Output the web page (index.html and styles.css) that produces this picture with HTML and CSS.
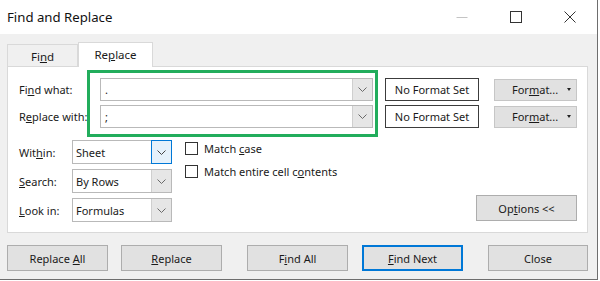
FILE: index.html
```html
<!DOCTYPE html>
<html>
<head>
<meta charset="utf-8">
<link rel="stylesheet" href="styles.css">
</head>
<body>
<div class="window">
  <div class="titlebar">
    <div class="title">Find and Replace</div>
    <div class="controls">
      <div class="ctl"><svg width="12" height="12" viewBox="0 0 12 12"><line x1="0.5" y1="6.5" x2="11.5" y2="6.5" stroke="#c4c4c4" stroke-width="1"/></svg></div>
      <div class="ctl"><svg width="12" height="12" viewBox="0 0 12 12"><rect x="0.5" y="0.5" width="11" height="11" fill="none" stroke="#333" stroke-width="1"/></svg></div>
      <div class="ctl"><svg width="12" height="12" viewBox="0 0 12 12"><path d="M0.5 0.5 L11.5 11.5 M11.5 0.5 L0.5 11.5" stroke="#333" stroke-width="1"/></svg></div>
    </div>
  </div>
  <div class="body">
    <div class="tabs">
      <div class="tab"><span>Fi<u>n</u>d</span></div>
      <div class="tab active"><span>Re<u>p</u>lace</span></div>
    </div>
    <div class="panel">
      <div class="highlight"></div>
      <div class="row">
        <div class="label wide">Fi<u>n</u>d what:</div>
        <div class="combo long"><span class="val">.</span><span class="drop"><svg width="9" height="5" viewBox="0 0 9 5"><polyline points="0.5,0.5 4.5,4.5 8.5,0.5" fill="none" stroke="#6a6a6a"/></svg></span></div>
        <div class="nofmt">No Format Set</div>
        <div class="fmtbtn"><span>For<u>m</u>at...</span><span class="tri"></span></div>
      </div>
      <div class="row second">
        <div class="label wide">R<u>e</u>place with:</div>
        <div class="combo long"><span class="val">;</span><span class="drop"><svg width="9" height="5" viewBox="0 0 9 5"><polyline points="0.5,0.5 4.5,4.5 8.5,0.5" fill="none" stroke="#6a6a6a"/></svg></span></div>
        <div class="nofmt">No Format Set</div>
        <div class="fmtbtn"><span>For<u>m</u>at...</span><span class="tri"></span></div>
      </div>
      <div class="lower">
        <div class="opts">
          <div class="label">Wit<u>h</u>in:</div>
          <div class="combo sel"><span class="val">Sheet</span><span class="drop focus"><svg width="9" height="5" viewBox="0 0 9 5"><polyline points="0.5,0.5 4.5,4.5 8.5,0.5" fill="none" stroke="#444"/></svg></span></div>
          <div class="label"><u>S</u>earch:</div>
          <div class="combo sel"><span class="val">By Rows</span><span class="drop"><svg width="9" height="5" viewBox="0 0 9 5"><polyline points="0.5,0.5 4.5,4.5 8.5,0.5" fill="none" stroke="#6a6a6a"/></svg></span></div>
          <div class="label"><u>L</u>ook in:</div>
          <div class="combo sel"><span class="val">Formulas</span><span class="drop"><svg width="9" height="5" viewBox="0 0 9 5"><polyline points="0.5,0.5 4.5,4.5 8.5,0.5" fill="none" stroke="#6a6a6a"/></svg></span></div>
        </div>
        <div class="checks">
          <div class="check"><span class="box"></span><span>Match <u>c</u>ase</span></div>
          <div class="check"><span class="box"></span><span>Match entire cell c<u>o</u>ntents</span></div>
        </div>
        <div class="btn options"><span>Op<u>t</u>ions &lt;&lt;</span></div>
      </div>
    </div>
    <div class="footer">
      <div class="btn fb"><span>Replace <u>A</u>ll</span></div>
      <div class="btn fb g13"><span><u>R</u>eplace</span></div>
      <div class="btn fb g25"><span>F<u>i</u>nd All</span></div>
      <div class="btn fb g14 default"><span><u>F</u>ind Next</span></div>
      <div class="btn fb g25 close"><span>Close</span></div>
    </div>
  </div>
</div>
</body>
</html>
```
FILE: styles.css
```css
* { box-sizing: border-box; }
html, body { margin: 0; padding: 0; background: #fff; }
body {
  width: 600px;
  height: 281px;
  overflow: hidden;
  font-family: "Segoe UI", "Noto Sans", sans-serif;
  font-size: 11px;
  color: #1a1a1a;
}
u { text-decoration: underline; text-underline-offset: 1px; }
.window {
  width: 598px;
  height: 280px;
  border-right: 1px solid #6e6e6e;
  border-bottom: 1px solid #6e6e6e;
  display: flex;
  flex-direction: column;
}
.titlebar {
  height: 34px;
  background: #fff;
  display: flex;
  align-items: center;
  padding-left: 7px;
}
.title { font-size: 13.2px; color: #111; }
.controls { margin-left: auto; display: flex; height: 34px; }
.ctl {
  width: 54px;
  display: flex;
  align-items: center;
  justify-content: center;
  padding-bottom: 1px;
}
.body {
  flex: 1;
  background: #f0f0f0;
  padding: 0 9px 0 7px;
}
.tabs {
  height: 32px;
  display: flex;
  align-items: flex-end;
}
.tab {
  width: 71px;
  height: 22px;
  border: 1px solid #d9d9d9;
  border-bottom: none;
  background: #f0f0f0;
  display: flex;
  align-items: center;
  justify-content: center;
  font-size: 11.5px;
  padding-top: 1px;
}
.tab.active {
  width: 75px;
  height: 25px;
  background: #fff;
  margin-bottom: -1px;
  position: relative;
  z-index: 1;
  padding-top: 0;
  padding-bottom: 2px;
}
.panel {
  position: relative;
  height: 167px;
  background: #fff;
  border: 1px solid #d9d9d9;
  padding: 11px 10px 0 11px;
}
.highlight {
  position: absolute;
  left: 79px;
  top: 3px;
  width: 291px;
  height: 67px;
  border: 3px solid #22ad5c;
  pointer-events: none;
}
.row {
  display: flex;
  align-items: center;
  height: 23px;
}
.row.second { margin-top: 4px; }
.label { white-space: nowrap; }
.label.wide { width: 81px; }
.combo {
  display: flex;
  align-items: stretch;
  border: 1px solid #b9b9b9;
  background: #fff;
  position: relative;
  z-index: 2;
}
.combo.long { width: 273px; height: 23px; }
.combo .val { flex: 1; padding-left: 4px; display: flex; align-items: center; }
.combo .drop {
  width: 20px;
  background: #e6e6e6;
  border-left: 1px solid #cfcfcf;
  display: flex;
  align-items: center;
  justify-content: center;
}
.combo .drop.focus {
  background: #e5f1fb;
  border: 1px solid #0078d7;
  margin: -1px -1px -1px 0;
  width: 21px;
}
.nofmt {
  width: 94px;
  height: 23px;
  margin-left: 12px;
  border: 1px solid #3c3c3c;
  display: flex;
  align-items: center;
  justify-content: center;
}
.fmtbtn {
  width: 83px;
  height: 22px;
  margin-left: 15px;
  background: #e1e1e1;
  border: 1px solid #c6c6c6;
  display: flex;
  align-items: center;
  padding-left: 17px;
  position: relative;
}
.tri {
  margin-left: auto;
  margin-right: 5px;
  width: 0;
  height: 0;
  border-left: 2.5px solid transparent;
  border-right: 2.5px solid transparent;
  border-top: 3px solid #222;
}
.lower {
  display: flex;
  margin-top: 12px;
}
.opts {
  display: grid;
  grid-template-columns: 53px 100px;
  grid-auto-rows: 24px;
  row-gap: 5px;
  align-items: center;
}
.combo.sel { height: 24px; }
.combo.sel .val { padding-left: 3px; }
.checks {
  margin-left: 13px;
  padding-top: 2px;
  display: flex;
  flex-direction: column;
  gap: 10px;
}
.check {
  display: flex;
  align-items: center;
  height: 13px;
  white-space: nowrap;
}
.box {
  width: 13px;
  height: 13px;
  border: 1px solid #333;
  background: #fff;
  margin-right: 6px;
}
.btn {
  background: #e1e1e1;
  border: 1px solid #adadad;
  display: flex;
  align-items: center;
  justify-content: center;
  height: 26px;
  white-space: pre;
}
.options {
  margin-left: auto;
  align-self: flex-end;
  width: 101px;
  margin-bottom: 1px;
}
.footer {
  display: flex;
  margin-top: 12px;
}
.fb { width: 101px; }
.g13 { margin-left: 13px; }
.g14 { margin-left: 14px; }
.g25 { margin-left: 25px; }
.close { width: 100px; }
.default { border: 2px solid #0078d7; }
```
